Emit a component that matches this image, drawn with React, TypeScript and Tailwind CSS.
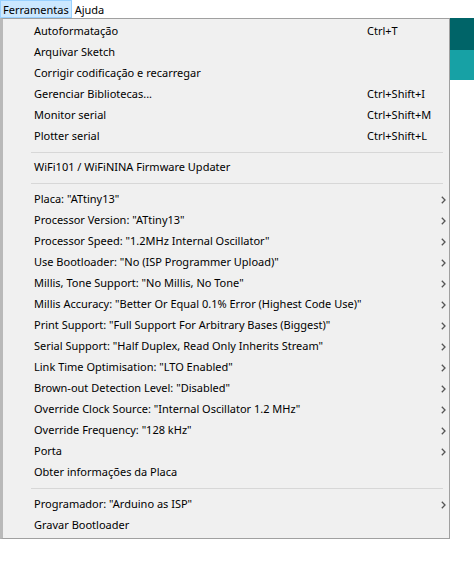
type Item = { label: string; shortcut?: string; sub?: boolean } | 'sep';

const items: Item[] = [
  { label: 'Autoformatação', shortcut: 'Ctrl+T' },
  { label: 'Arquivar Sketch' },
  { label: 'Corrigir codificação e recarregar' },
  { label: 'Gerenciar Bibliotecas...', shortcut: 'Ctrl+Shift+I' },
  { label: 'Monitor serial', shortcut: 'Ctrl+Shift+M' },
  { label: 'Plotter serial', shortcut: 'Ctrl+Shift+L' },
  'sep',
  { label: 'WiFi101 / WiFiNINA Firmware Updater' },
  'sep',
  { label: 'Placa: "ATtiny13"', sub: true },
  { label: 'Processor Version: "ATtiny13"', sub: true },
  { label: 'Processor Speed: "1.2MHz Internal Oscillator"', sub: true },
  { label: 'Use Bootloader: "No (ISP Programmer Upload)"', sub: true },
  { label: 'Millis, Tone Support: "No Millis, No Tone"', sub: true },
  { label: 'Millis Accuracy: "Better Or Equal 0.1% Error (Highest Code Use)"', sub: true },
  { label: 'Print Support: "Full Support For Arbitrary Bases (Biggest)"', sub: true },
  { label: 'Serial Support: "Half Duplex, Read Only Inherits Stream"', sub: true },
  { label: 'Link Time Optimisation: "LTO Enabled"', sub: true },
  { label: 'Brown-out Detection Level: "Disabled"', sub: true },
  { label: 'Override Clock Source: "Internal Oscillator 1.2 MHz"', sub: true },
  { label: 'Override Frequency: "128 kHz"', sub: true },
  { label: 'Porta', sub: true },
  { label: 'Obter informações da Placa' },
  'sep',
  { label: 'Programador: "Arduino as ISP"', sub: true },
  { label: 'Gravar Bootloader' },
];

function Chevron() {
  return (
    <svg width="5" height="8" viewBox="0 0 5 8" className="text-[#555]">
      <path d="M0.8 0.8 L4 4 L0.8 7.2" fill="none" stroke="currentColor" strokeWidth="1.3" />
    </svg>
  );
}

export default function App() {
  return (
    <div
      className="w-[474px] h-[562px] bg-white text-black text-[11px] overflow-hidden"
      style={{ fontFamily: '"Noto Sans", "Open Sans", sans-serif' }}
    >
      <div className="h-[18px] flex items-stretch text-[11px]">
        <div className="px-[2px] bg-[#cce8ff] border border-[#99d1ff] flex items-center leading-none">
          Ferramentas
        </div>
        <div className="px-[3px] flex items-center leading-none">Ajuda</div>
      </div>
      <div className="flex">
        <div className="w-[450px] bg-[#f0f0f0] border border-[#a0a0a0] border-l-[3px] border-l-[#b9b9b9] pt-[2px] pb-[2px]">
          {items.map((it, i) => {
            if (it === 'sep') {
              const h = i < 8 ? 'h-[10px]' : 'h-[11px]';
              return (
                <div key={i} className={`${h} flex items-center pl-[28px] pr-[6px]`}>
                  <div className="h-px w-full bg-[#d7d7d7]" />
                </div>
              );
            }
            return (
              <div key={i} className="h-[21px] flex items-center pl-[31px] relative">
                <span className="whitespace-nowrap">{it.label}</span>
                {it.shortcut && (
                  <span className="absolute left-[364px] whitespace-nowrap">{it.shortcut}</span>
                )}
                {it.sub && (
                  <span className="absolute left-[438px] top-[7px] flex">
                    <Chevron />
                  </span>
                )}
              </div>
            );
          })}
        </div>
        <div className="flex-1 flex flex-col">
          <div className="h-[32px] bg-[#006468]" />
          <div className="h-[30px] bg-[#17a1a5]" />
        </div>
      </div>
    </div>
  );
}
